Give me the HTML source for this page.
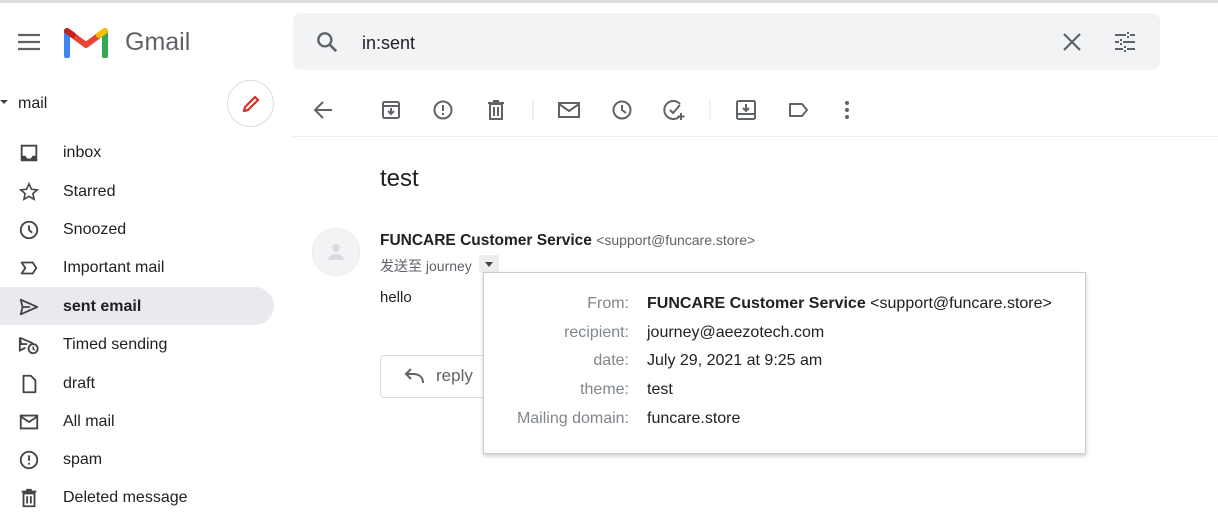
<!DOCTYPE html><html><head><meta charset="utf-8"><style>
*{margin:0;padding:0;box-sizing:border-box}
body{width:1218px;height:506px;overflow:hidden;background:#fff;font-family:"Liberation Sans","Noto Sans CJK SC",sans-serif;color:#202124;position:relative}
.a{position:absolute}
.row{position:absolute;left:0;width:274px;height:38px;display:flex;align-items:center}
.row svg{position:absolute;left:18px;width:22px;height:22px}
.row span{position:absolute;left:63px;font-size:16px;color:#202124}
</style></head><body>
<div class="a" style="left:0;top:0;width:1218px;height:3px;background:#dadce0"></div>
<svg class="a" style="left:17px;top:32px" width="24" height="20" viewBox="0 0 24 20"><path d="M1 3h22M1 10h22M1 17h22" stroke="#5f6368" stroke-width="2.2"/></svg>
<svg class="a" style="left:64px;top:25px" width="44" height="33" viewBox="0 0 44 33"><path d="M3 31V6l19 14L41 6v25" fill="none" stroke="#ea4335" stroke-width="6" stroke-linejoin="round"/><path d="M3 31V6" stroke="#4285f4" stroke-width="6" stroke-linecap="round"/><path d="M41 31V8" stroke="#34a853" stroke-width="6" stroke-linecap="round"/><path d="M35 10l6-4" stroke="#fbbc04" stroke-width="6" stroke-linecap="round"/><path d="M3 6l6 4" stroke="#c5221f" stroke-width="6" stroke-linecap="round"/></svg>
<div class="a" style="left:125px;top:28px;font-size:25px;color:#5f6368">Gmail</div>
<div class="a" style="left:0;top:100px;width:0;height:0;border-left:4px solid transparent;border-right:4px solid transparent;border-top:4px solid #444"></div>
<div class="a" style="left:18px;top:95px;font-size:16px">mail</div>
<div class="a" style="left:227px;top:80px;width:47px;height:47px;border-radius:50%;border:1px solid #dadce0;background:#fff"></div>
<svg class="a" style="left:240px;top:93px" width="22" height="22" viewBox="0 0 22 22"><path d="M4 18l1-4L15 4l3 3L8 17z" fill="none" stroke="#d93025" stroke-width="2.2" stroke-linejoin="round"/></svg>

<div class="row" style="top:134px"><svg viewBox="0 0 24 24"><path d="M4 4h16v16H4z" fill="none" stroke="#444" stroke-width="2"/><path d="M4 15h4l2 3h4l2-3h4v5H4z" fill="#444"/></svg><span>inbox</span></div>
<div class="row" style="top:173px"><svg viewBox="0 0 24 24"><path d="M12 3l2.7 6 6.3.6-4.8 4.2 1.4 6.2L12 16.8 6.4 20l1.4-6.2L3 9.6 9.3 9z" fill="none" stroke="#444" stroke-width="1.7"/></svg><span>Starred</span></div>
<div class="row" style="top:211px"><svg viewBox="0 0 24 24"><circle cx="12" cy="12" r="9" fill="none" stroke="#444" stroke-width="2"/><path d="M12 7v5l3.5 3" fill="none" stroke="#444" stroke-width="2"/></svg><span>Snoozed</span></div>
<div class="row" style="top:249px"><svg viewBox="0 0 24 24"><path d="M4 6h12l4 6-4 6H4l4-6z" fill="none" stroke="#444" stroke-width="2" stroke-linejoin="round"/></svg><span>Important mail</span></div>
<div class="a" style="left:0;top:287px;width:274px;height:38px;background:#e8eaed;border-radius:0 19px 19px 0"></div>
<div class="row" style="top:288px"><svg viewBox="0 0 24 24"><path d="M3 4l18 8-18 8 2-8z M5 12h8" fill="none" stroke="#444" stroke-width="2" stroke-linejoin="round"/></svg><span style="font-weight:bold">sent email</span></div>
<div class="row" style="top:326px"><svg viewBox="0 0 24 24"><path d="M2 4l14 6M2 4l1.5 7H10M2 4v14l6-3" fill="none" stroke="#444" stroke-width="2"/><circle cx="16.5" cy="16" r="5" fill="#fff" stroke="#444" stroke-width="2"/><path d="M16.5 13.5v3l2 1" fill="none" stroke="#444" stroke-width="1.5"/></svg><span>Timed sending</span></div>
<div class="row" style="top:365px"><svg viewBox="0 0 24 24"><path d="M6 3h8l5 5v13H6z" fill="none" stroke="#444" stroke-width="2" stroke-linejoin="round"/></svg><span>draft</span></div>
<div class="row" style="top:403px"><svg viewBox="0 0 24 24"><path d="M3 5h18v14H3z M3 6l9 6 9-6" fill="none" stroke="#444" stroke-width="2"/></svg><span>All mail</span></div>
<div class="row" style="top:441px"><svg viewBox="0 0 24 24"><circle cx="12" cy="12" r="9" fill="none" stroke="#444" stroke-width="2"/><path d="M12 7v6M12 15v2" stroke="#444" stroke-width="2"/></svg><span>spam</span></div>
<div class="row" style="top:479px"><svg viewBox="0 0 24 24"><path d="M6 7h12v14H6z M4 5h16 M9 3h6 M10 10v8 M14 10v8" fill="none" stroke="#444" stroke-width="2"/></svg><span>Deleted message</span></div>

<div class="a" style="left:293px;top:13px;width:867px;height:57px;background:#f1f3f4;border-radius:8px"></div>
<svg class="a" style="left:314px;top:29px" width="26" height="26" viewBox="0 0 24 24"><circle cx="10" cy="10" r="6" fill="none" stroke="#5f6368" stroke-width="2.2"/><path d="M14.5 14.5l6 6" stroke="#5f6368" stroke-width="2.4"/></svg>
<div class="a" style="left:362px;top:33px;font-size:18px">in:sent</div>
<svg class="a" style="left:1061px;top:31px" width="22" height="22" viewBox="0 0 22 22"><path d="M3 3l16 16M19 3L3 19" stroke="#5f6368" stroke-width="2.2"/></svg>
<svg class="a" style="left:1113px;top:30px" width="24" height="24" viewBox="0 0 24 24"><path d="M2 5h20M2 12h20M2 19h20" stroke="#5f6368" stroke-width="2"/><path d="M15 2v6M8 9v6M12 16v6" stroke="#5f6368" stroke-width="2"/><path d="M13 5h4M6 12h4M10 19h4" stroke="#f1f3f4" stroke-width="2"/></svg>

<svg class="a" style="left:313px;top:98px" width="560" height="24" viewBox="0 0 560 24" fill="none" stroke="#5f6368" stroke-width="2">
<path d="M19 12H3M10 4l-8 8 8 8"/>
<g transform="translate(68,2)"><rect x="2" y="2" width="16" height="16" rx="1.5"/><path d="M2 6h16M10 8v6M7 11l3 3 3-3"/></g>
<g transform="translate(120,2)"><circle cx="10" cy="10" r="8.5"/><path d="M10 5v6M10 13v2"/></g>
<g transform="translate(173,2)"><path d="M4 4h12v15H4z M2 3h16 M7 1h6 M8 7v9 M12 7v9"/></g>
<path d="M220 2v20" stroke="#e0e0e0" stroke-width="1"/>
<g transform="translate(245,3)"><path d="M1 2h20v14H1z M1 3l10 7 10-7"/></g>
<g transform="translate(299,2)"><circle cx="10" cy="10" r="8.5"/><path d="M10 5v5l4 3"/></g>
<g transform="translate(351,2)"><path d="M16 4A9 9 0 1 0 15 17"/><path d="M6 10l3 3 7-8M17 13v7M13.5 16.5h7"/></g>
<path d="M397 2v20" stroke="#e0e0e0" stroke-width="1"/>
<g transform="translate(423,2)"><rect x="1" y="1" width="18" height="18" rx="1.5"/><path d="M1 14h18" /><path d="M10 4v6M7 8l3 3 3-3"/></g>
<g transform="translate(475,4)"><path d="M2 2h12l5 6-5 6H2z" stroke-linejoin="round"/></g>
<g transform="translate(532,2)" fill="#5f6368" stroke="none"><circle cx="2" cy="3" r="2"/><circle cx="2" cy="10" r="2"/><circle cx="2" cy="17" r="2"/></g>
</svg>
<div class="a" style="left:293px;top:136px;width:925px;height:1px;background:#eceff1"></div>

<div class="a" style="left:380px;top:165px;font-size:24px">test</div>
<div class="a" style="left:312px;top:228px;width:48px;height:48px;border-radius:50%;background:#f1f3f4;border:1px solid #e8eaed"></div>
<svg class="a" style="left:324px;top:240px" width="24" height="24" viewBox="0 0 24 24"><circle cx="12" cy="8" r="4" fill="#dadce0"/><path d="M4 20c0-4 4-6 8-6s8 2 8 6z" fill="#dadce0"/></svg>
<div class="a" style="left:380px;top:232px;font-size:15.5px;white-space:nowrap"><b>FUNCARE Customer Service</b> <span style="font-size:14px;color:#5f6368">&lt;support@funcare.store&gt;</span></div>
<div class="a" style="left:380px;top:256px;font-size:14px;color:#5f6368">发送至 journey</div>
<div class="a" style="left:479px;top:255px;width:20px;height:18px;background:#eee;border-radius:2px"></div>
<div class="a" style="left:485px;top:262px;width:0;height:0;border-left:4px solid transparent;border-right:4px solid transparent;border-top:5px solid #444"></div>
<div class="a" style="left:380px;top:289px;font-size:15px">hello</div>
<div class="a" style="left:380px;top:355px;width:130px;height:43px;border:1px solid #dadce0;border-radius:4px"></div>
<svg class="a" style="left:403px;top:366px" width="22" height="20" viewBox="0 0 22 20"><path d="M20 17c0-6-4-9-10-9H3M8 3L3 8l5 5" fill="none" stroke="#5f6368" stroke-width="2"/></svg>
<div class="a" style="left:436px;top:366px;font-size:17px;color:#5f6368">reply</div>

<div class="a" style="left:483px;top:272px;width:603px;height:182px;background:#fff;border:1px solid #ccc;box-shadow:0 2px 4px rgba(0,0,0,.2)">
<div style="position:relative;font-size:16px">
<div style="position:absolute;top:22px;left:0;width:145px;text-align:right;color:#80868b">From:</div>
<div style="position:absolute;top:22px;left:163px;white-space:nowrap"><b>FUNCARE Customer Service</b> &lt;support@funcare.store&gt;</div>
<div style="position:absolute;top:51px;left:0;width:145px;text-align:right;color:#80868b">recipient:</div>
<div style="position:absolute;top:51px;left:163px">journey@aeezotech.com</div>
<div style="position:absolute;top:79px;left:0;width:145px;text-align:right;color:#80868b">date:</div>
<div style="position:absolute;top:79px;left:163px">July 29, 2021 at 9:25 am</div>
<div style="position:absolute;top:108px;left:0;width:145px;text-align:right;color:#80868b">theme:</div>
<div style="position:absolute;top:108px;left:163px">test</div>
<div style="position:absolute;top:137px;left:0;width:145px;text-align:right;color:#80868b;white-space:nowrap">Mailing domain:</div>
<div style="position:absolute;top:137px;left:163px">funcare.store</div>
</div></div>
</body></html>
